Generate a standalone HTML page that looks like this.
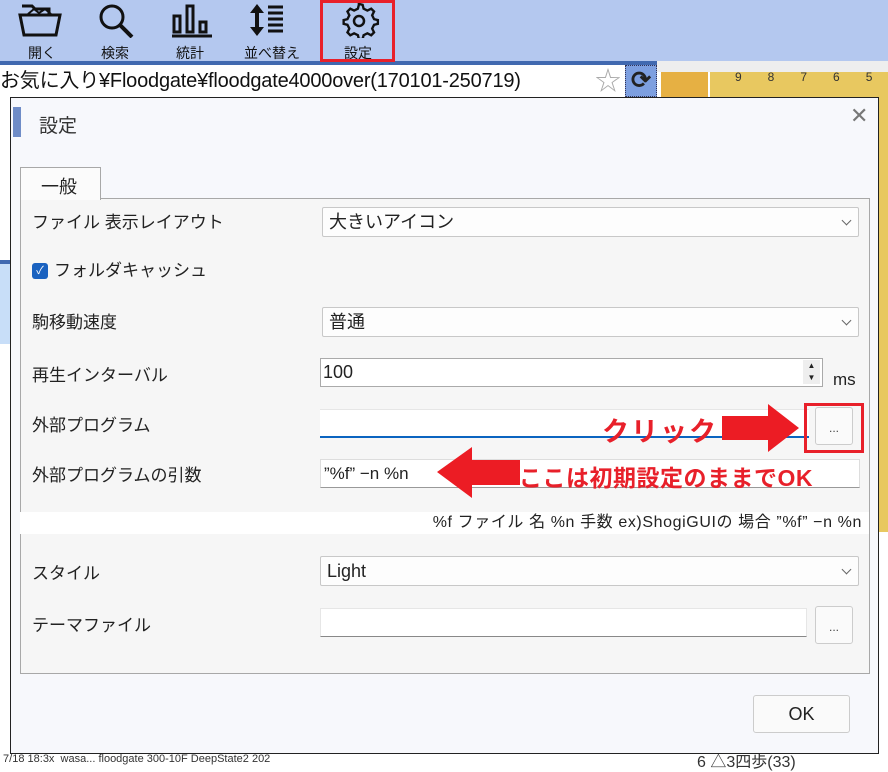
<!DOCTYPE html>
<html><head><meta charset="utf-8"><style>
*{box-sizing:border-box;margin:0;padding:0}
body{width:888px;height:766px;position:relative;overflow:hidden;background:#fff;font-family:"Liberation Sans","Noto Sans CJK JP",sans-serif;color:#222}
.a{position:absolute}
.lbl{position:absolute;left:32px;font-size:17px;color:#222;line-height:24px}
.sel{position:absolute;left:322px;width:537px;height:30px;background:#fdfdfd;border:1px solid #c8c8c8;border-radius:2px;font-size:18px;line-height:28px;padding-left:6px}
.sel:after{content:"";position:absolute;right:8px;top:9px;width:6px;height:6px;border-right:1px solid #666;border-bottom:1px solid #666;transform:rotate(45deg)}
.btn{position:absolute;width:38px;height:38px;border:1px solid #ccc;border-radius:3px;background:#fafafa;font-size:12px;text-align:center;line-height:40px;color:#444}
.tb{position:absolute;top:43px;font-size:14px;color:#111}
</style></head><body>
<div class="a" style="left:0;top:0;width:888px;height:61px;background:#b4c8ef"></div>
<div class="a" style="left:0;top:61px;width:657px;height:4px;background:#4169b0"></div>
<svg class="a" style="left:18px;top:2px" width="44" height="36" viewBox="0 0 44 36"><path d="M4 4h10l3 3h14v6M2 13h40l-4 20H6z" fill="none" stroke="#111" stroke-width="3"/><path d="M10 12l6-5 5 4 6-4 6 5" fill="none" stroke="#111" stroke-width="2"/></svg>
<svg class="a" style="left:95px;top:2px" width="44" height="36"><circle cx="17" cy="15" r="11" fill="none" stroke="#111" stroke-width="3"/><path d="M25 23l12 12" stroke="#111" stroke-width="4"/></svg>
<svg class="a" style="left:170px;top:2px" width="44" height="36"><path d="M2 34h40" stroke="#111" stroke-width="3"/><rect x="4" y="14" width="6" height="16" fill="none" stroke="#111" stroke-width="3"/><rect x="17" y="4" width="6" height="26" fill="none" stroke="#111" stroke-width="3"/><rect x="30" y="20" width="6" height="10" fill="none" stroke="#111" stroke-width="3"/></svg>
<svg class="a" style="left:250px;top:2px" width="44" height="36"><path d="M7 2l7 9H0zM7 34l7-9H0z" fill="#111"/><path d="M5 10h4v16H5z" fill="#111"/><path d="M18 5h15M18 11h15M18 17h15M18 23h15M18 29h15" stroke="#111" stroke-width="3"/></svg>
<svg class="a" style="left:337px;top:2px" width="44" height="36" viewBox="0 0 44 36"><path d="M22 2l4 1 1 4 4 2 4-2 3 3-2 4 2 4 4 1v4l-4 1-2 4 2 4-3 3-4-2-4 2-1 4h-4l-1-4-4-2-4 2-3-3 2-4-2-4-4-1v-4l4-1 2-4-2-4 3-3 4 2 4-2 1-4z" transform="scale(0.95) translate(1,0)" fill="none" stroke="#111" stroke-width="2.5"/><circle cx="22" cy="19" r="5" fill="none" stroke="#111" stroke-width="2.5"/></svg>
<div class="tb" style="left:28px">開く</div>
<div class="tb" style="left:101px">検索</div>
<div class="tb" style="left:176px">統計</div>
<div class="tb" style="left:244px">並べ替え</div>
<div class="tb" style="left:344px">設定</div>
<div class="a" style="left:320px;top:0;width:75px;height:62px;border:3px solid #e8202a"></div>
<div class="a" style="left:0;top:65px;width:625px;height:32px;background:#fff;font-size:20px;line-height:32px;white-space:nowrap;color:#111;letter-spacing:-0.2px">お気に入り¥Floodgate¥floodgate4000over(170101-250719)</div>
<div class="a" style="left:595px;top:66px;font-size:26px;color:#aaa;line-height:30px">☆</div>
<div class="a" style="left:625px;top:65px;width:32px;height:32px;background:#7d9fe0;border:1px dotted #335;font-size:24px;text-align:center;line-height:30px;font-weight:bold">⟳</div>
<div class="a" style="left:657px;top:61px;width:231px;height:11px;background:#eee"></div>
<div class="a" style="left:661px;top:72px;width:47px;height:30px;background:#e6b043"></div>
<div class="a" style="left:710px;top:72px;width:178px;height:460px;background:#e8c860"></div>
<div class="a" style="left:735px;top:70px;font-size:12px;letter-spacing:26px;color:#333">98765</div>
<div class="a" style="left:0;top:260px;width:10px;height:500px;background:#fff;border-top:4px solid #4169b0"></div>
<div class="a" style="left:0;top:264px;width:10px;height:80px;background:#c8def8"></div>
<div class="a" style="left:878px;top:540px;width:10px;height:226px;background:#fff"></div>
<div class="a" style="left:0;top:753px;width:888px;height:13px;background:#fff;font-size:11px;color:#333;white-space:nowrap">&nbsp;7/18 18:3x &nbsp;wasa... floodgate 300-10F DeepState2 202</div>
<div class="a" style="left:697px;top:748px;font-size:16px;color:#333">6 △3四歩(33)</div>
<div class="a" style="left:10px;top:97px;width:869px;height:657px;background:#f7f8fc;border:1px solid #222"></div>
<div class="a" style="left:13px;top:107px;width:8px;height:30px;background:#6f8cc7"></div>
<div class="a" style="left:39px;top:111px;font-size:19px;color:#333">設定</div>
<div class="a" style="left:850px;top:103px;font-size:22px;color:#777">✕</div>
<div class="a" style="left:20px;top:198px;width:850px;height:476px;background:#f6f6f6;border:1px solid #a8a8a8"></div>
<div class="a" style="left:20px;top:167px;width:81px;height:33px;background:#fbfbfb;border:1px solid #a8a8a8;border-bottom:none;font-size:18px;padding:5px 0 0 20px">一般</div>
<div class="lbl" style="top:211px">ファイル 表示レイアウト</div>
<div class="sel" style="top:207px">大きいアイコン</div>
<div class="a" style="left:32px;top:263px;width:16px;height:16px;background:#1a62c0;border-radius:3px;color:#fff;font-size:11px;text-align:center;line-height:16px">✓</div>
<div class="lbl" style="left:54px;top:259px">フォルダキャッシュ</div>
<div class="lbl" style="top:311px">駒移動速度</div>
<div class="sel" style="top:307px">普通</div>
<div class="lbl" style="top:364px">再生インターバル</div>
<div class="a" style="left:320px;top:358px;width:503px;height:29px;background:#fff;border:1px solid #aaa;font-size:18px;line-height:26px;padding-left:2px">100</div>
<div class="a" style="left:803px;top:360px;width:17px;height:24px;font-size:8px;line-height:12px;text-align:center;background:#eee">▲<br>▼</div>
<div class="a" style="left:833px;top:370px;font-size:17px">ms</div>
<div class="lbl" style="top:414px">外部プログラム</div>
<div class="a" style="left:320px;top:409px;width:489px;height:29px;background:#fff;border-top:1px solid #e6e6e6;border-bottom:2px solid #0a64c0"></div>
<div class="btn" style="left:815px;top:407px">...</div>
<div class="a" style="left:804px;top:403px;width:60px;height:50px;border:3px solid #e8202a"></div>
<div class="lbl" style="top:464px">外部プログラムの引数</div>
<div class="a" style="left:320px;top:459px;width:540px;height:29px;background:#fff;border:1px solid #ddd;border-bottom:1px solid #999;font-size:17px;line-height:27px;padding-left:3px">”%f” −n %n</div>
<div class="a" style="left:20px;top:512px;width:849px;height:22px;background:#fff"></div>
<div class="a" style="left:300px;top:512px;width:562px;font-size:16px;line-height:22px;text-align:right;white-space:nowrap;letter-spacing:0.6px">%f ファイル 名 %n 手数 ex)ShogiGUIの 場合 ”%f” −n %n</div>
<div class="lbl" style="top:562px">スタイル</div>
<div class="sel" style="top:556px;left:320px;width:539px">Light</div>
<div class="lbl" style="top:614px">テーマファイル</div>
<div class="a" style="left:320px;top:608px;width:487px;height:29px;background:#fff;border:1px solid #e6e6e6;border-bottom:1px solid #888"></div>
<div class="btn" style="left:815px;top:606px">...</div>
<div class="a" style="left:753px;top:695px;width:97px;height:38px;border:1px solid #ccc;border-radius:3px;background:#fafafa;font-size:18px;text-align:center;line-height:36px">OK</div>
<svg class="a" style="left:0;top:0" width="888" height="766"><path d="M722 416h46v-12l31 24-31 24v-12h-46z" fill="#ec1c24"/><path d="M437 472l35-25v13h48v25h-48v13z" fill="#ec1c24"/></svg>
<div class="a" style="left:602px;top:410px;font-size:27px;font-weight:bold;color:#e8202a;letter-spacing:2px">クリック</div>
<div class="a" style="left:519px;top:459px;font-size:23px;font-weight:bold;color:#e8202a;letter-spacing:0.5px">ここは初期設定のままでOK</div>
</body></html>
